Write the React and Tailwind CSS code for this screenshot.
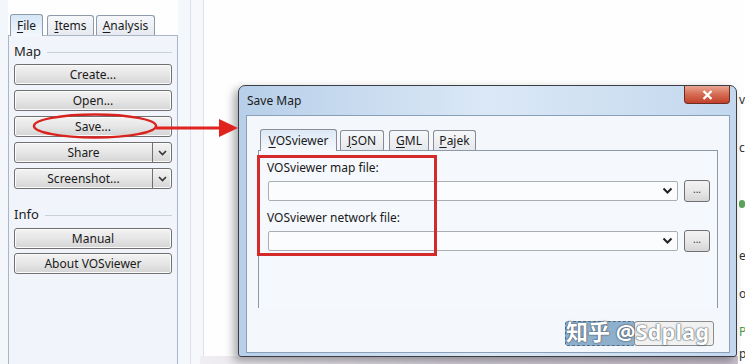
import React from "react";

const font = { fontFamily: '"Noto Sans", "Noto Sans CJK SC", sans-serif' };

// Win7 style push button
const WinButton = ({ children, className = "", dropdown = false }) => (
  <div
    className={`relative flex h-[21px] items-stretch rounded-[3px] border border-[#707070] bg-gradient-to-b from-[#f3f3f3] via-[#e6e6e6] to-[#d4d4d4] text-[12px] leading-none text-[#1a1a1a] shadow-[inset_0_0_0_1px_#fbfbfb] ${className}`}
  >
    <div className="flex flex-1 items-center justify-center">{children}</div>
    {dropdown && (
      <div className="flex w-[19px] items-center justify-center border-l border-[#707070]">
        <svg width="9" height="6" viewBox="0 0 9 6">
          <path d="M1 1 L4.5 4.5 L8 1" fill="none" stroke="#333" strokeWidth="1.6" />
        </svg>
      </div>
    )}
  </div>
);

const GroupLabel = ({ children, className = "" }) => (
  <div className={`flex h-[16px] items-center gap-[6px] text-[13px] text-[#1e1e1e] ${className}`}>
    <span>{children}</span>
    <div className="h-px flex-1 bg-[#c9d0da]" />
  </div>
);

const SideTab = ({ ul, rest, active = false, className = "" }) => (
  <div
    className={`flex items-center justify-center rounded-t-[3px] border border-b-0 border-[#8d9bab] text-[12px] text-[#1a1a1a] ${
      active
        ? "h-[22px] bg-gradient-to-b from-[#d5e6f7] to-[#f4f8fc]"
        : "h-[20px] bg-gradient-to-b from-[#f5f7fa] to-[#e6eaf0]"
    } ${className}`}
  >
    <span className="underline decoration-1 underline-offset-2">{ul}</span>
    <span>{rest}</span>
  </div>
);

const ComboRow = ({ label, mt = "" }) => (
  <div className={mt}>
    <div className="pl-[8px] text-[12px] leading-[16px] text-[#1a1a1a]">{label}</div>
    <div className="mt-[4px] flex items-center">
      <div className="ml-[9px] flex h-[20px] w-[410px] items-center justify-end rounded-[2px] border border-[#abadb3] bg-[#fbfcfe] pr-[4px]">
        <svg width="11" height="8" viewBox="0 0 11 8">
          <path d="M1.5 1.5 L5.5 5.5 L9.5 1.5" fill="none" stroke="#222" strokeWidth="2" />
        </svg>
      </div>
      <div className="ml-[6px] flex h-[22px] w-[26px] items-center justify-center rounded-[3px] border border-[#707070] bg-gradient-to-b from-[#f3f3f3] via-[#e8e8e8] to-[#d6d6d6] pb-[4px] text-[10px] text-[#333]">
        ...
      </div>
    </div>
  </div>
);

const DialogTab = ({ ul, rest, active = false, className = "" }) => (
  <div
    className={`flex items-center justify-center rounded-t-[3px] border border-b-0 border-[#898c95] text-[12px] text-[#1a1a1a] ${
      active
        ? "h-[22px] bg-gradient-to-b from-[#dce9f6] to-[#f7f9fc]"
        : "h-[20px] bg-gradient-to-b from-[#f7f8fa] to-[#e5e8ec]"
    } ${className}`}
  >
    <span className="underline decoration-1 underline-offset-2">{ul}</span>
    <span>{rest}</span>
  </div>
);

export default function App() {
  return (
    <div className="relative h-[364px] w-[745px] overflow-hidden bg-[#fdfefd]" style={font}>
      {/* left side panel */}
      <div className="flex h-full">
        <div className="w-[8px] bg-[#f3f6fb]" />
        <div className="flex w-[170px] flex-col pt-[14px]">
          <div className="flex h-[21px] items-end pl-[2px]">
            <SideTab ul="F" rest="ile" active className="relative z-10 -mb-px w-[33px]" />
            <SideTab ul="I" rest="tems" className="ml-[4px] w-[47px]" />
            <SideTab ul="A" rest="nalysis" className="ml-[2px] w-[59px]" />
          </div>
          <div className="flex-1 border border-b-0 border-[#a9b6c6] bg-[#f1f5fb] px-[5px] pt-[8px]">
            <GroupLabel>Map</GroupLabel>
            <div className="mt-[4px] flex flex-col gap-[5px]">
              <WinButton>Create...</WinButton>
              <WinButton>Open...</WinButton>
              <WinButton>Save...</WinButton>
              <WinButton dropdown>Share</WinButton>
              <WinButton dropdown>Screenshot...</WinButton>
            </div>
            <GroupLabel className="mt-[18px]">Info</GroupLabel>
            <div className="mt-[5px] flex flex-col gap-[4px]">
              <WinButton>Manual</WinButton>
              <WinButton>About VOSviewer</WinButton>
            </div>
          </div>
        </div>
        <div className="w-[12px] bg-[#f4f7fb]" />
        <div className="w-[14px] border-x border-[#dde3eb] bg-[#f6f8fc]" />
      </div>

      {/* bits of the window behind the dialog */}
      <div className="absolute left-[739px] top-0 flex h-full flex-col text-[12px] leading-none text-[#333]">
        <span className="mt-[94px]">v</span>
        <span className="mt-[36px]">c</span>
        <span className="mt-[46px] h-[8px] w-[6px] rounded-full bg-[#5aa35a]" />
        <span className="mt-[42px]">e</span>
        <span className="mt-[26px]">o</span>
        <span className="mt-[26px] text-[#4a9a4a]">P</span>
        <span className="mt-[10px]">p</span>
      </div>
      <div className="absolute bottom-0 left-[200px] h-[8px] w-[538px] bg-gradient-to-r from-[#f0eef2] via-[#d4cfd9] to-[#c9c1cf]" />

      {/* Save Map dialog */}
      <div className="absolute left-[238px] top-[85px] flex h-[272px] w-[499px] flex-col rounded-t-[7px] rounded-b-[3px] border border-[#3b3f45] bg-gradient-to-r from-[#b7cfe9] via-[#dbe8f6] to-[#c3d8ee] shadow-[-4px_4px_10px_rgba(0,0,0,0.35)]">
        <div className="relative flex h-[29px] items-center pl-[8px] text-[12px] text-[#1a1a1a]">
          Save Map
          <div className="absolute right-[6px] top-0 flex h-[18px] w-[46px] items-center justify-center rounded-b-[4px] border border-t-0 border-[#6e2c22] bg-gradient-to-b from-[#e9a593] via-[#d46a52] to-[#c2412a]">
            <svg width="11" height="10" viewBox="0 0 11 10">
              <path d="M1.5 1 L9.5 9 M9.5 1 L1.5 9" stroke="#fff" strokeWidth="2.4" />
            </svg>
          </div>
        </div>
        <div className="mb-[3px] ml-[7px] mr-[6px] flex-1 border border-[#8a9fb8] bg-[#f4f7fc] px-[11px] pt-[12px]">
          <div className="flex h-[22px] items-end pl-[2px]">
            <DialogTab ul="V" rest="OSviewer" active className="relative z-10 -mb-px w-[77px]" />
            <DialogTab ul="J" rest="SON" className="ml-[3px] w-[44px]" />
            <DialogTab ul="G" rest="ML" className="ml-[5px] w-[40px]" />
            <DialogTab ul="P" rest="ajek" className="ml-[4px] w-[43px]" />
          </div>
          <div className="h-[158px] w-[460px] border border-b-0 border-[#8e98a6] bg-[#f5f8fd] pt-[9px]">
            <ComboRow label="VOSviewer map file:" />
            <ComboRow label="VOSviewer network file:" mt="mt-[8px]" />
          </div>
        </div>
      </div>

      {/* watermark over the dialog buttons */}
      <div className="absolute left-[565px] top-[321px] h-[25px] w-[70px] rounded-[3px] border border-dashed border-[#4f6c86] bg-[#8fb0cc]" />
      <div className="absolute left-[634px] top-[321px] h-[25px] w-[80px] rounded-[3px] border border-[#8b8b8b] bg-[#f1f1f1]" />
      <div className="absolute left-[566px] top-[316px] text-[22px] font-bold leading-[30px] text-white [text-shadow:0_0_1px_#3d4a57,0_0_2px_#3d4a57]">
        知乎 @Sdplag
      </div>

      {/* red annotations */}
      <svg className="absolute left-0 top-0" width="745" height="364" viewBox="0 0 745 364">
        <ellipse cx="95" cy="126" rx="61" ry="11.5" fill="none" stroke="#d9231f" strokeWidth="2.5" />
        <path d="M156 128 L222 128" stroke="#e0231f" strokeWidth="3" />
        <path d="M219 119 L238 128 L219 137 Z" fill="#e0231f" />
        <rect x="258.5" y="156.5" width="177" height="98" fill="none" stroke="#d42a2a" strokeWidth="3" />
      </svg>
    </div>
  );
}
